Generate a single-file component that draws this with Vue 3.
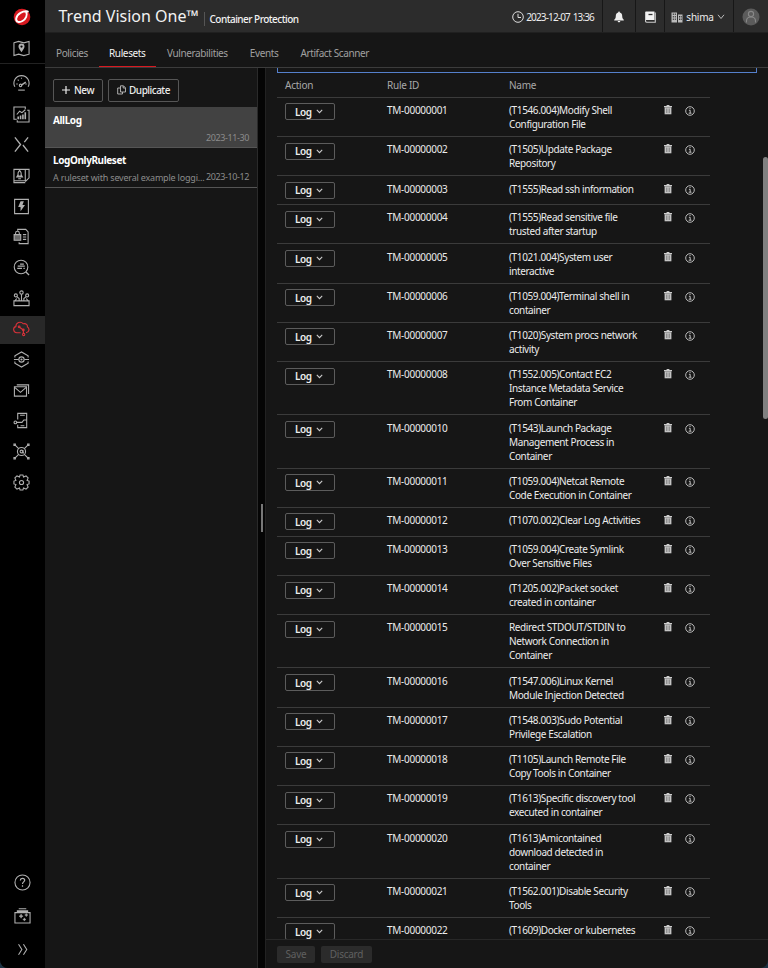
<template>
  <div class="app">
    <aside class="sidebar">
      <div class="logo">
        <svg width="18" height="18" viewBox="0 0 18 18">
          <circle cx="9" cy="9" r="8.300" fill="#d71920" />
          <path d="M14.800 3.500C10 2.500 4 6 3.200 10.500c-.5 3.800 3.300 4.300 6.300 2.500 3.500-2.100 5.200-6 3.700-9" fill="none" stroke="#fff" stroke-width="1.900" stroke-linecap="round" />
        </svg>
      </div>
      <div class="nav map"><svg class="icon" viewBox="0 0 18 18" v-html="icons.map"></svg></div>
      <div v-for="name in navItems" :key="name" class="nav" :class="{ active: name === 'cloud' }">
        <svg class="icon" viewBox="0 0 18 18" v-html="icons[name]"></svg>
      </div>
      <div class="nav-bottom">
        <div v-for="name in bottomItems" :key="name" class="nav">
          <svg class="icon" viewBox="0 0 18 18" v-html="icons[name]"></svg>
        </div>
      </div>
    </aside>

    <div class="main">
      <header class="header">
        <span class="title">Trend Vision One™</span>
        <span class="subtitle">Container Protection</span>
        <div class="clock">
          <svg width="12" height="12" viewBox="0 0 12 12" fill="none" stroke="#ddd">
            <circle cx="6" cy="6" r="5.300" /><path d="M6 2.800V6.500H9" />
          </svg>
          <span>2023-12-07 13:36</span>
        </div>
        <div class="tool bell">
          <svg width="10" height="12" viewBox="0 0 10 12" fill="#eee">
            <path d="M5 .5c.6 0 .8.400.8.900C7.500 1.800 8.200 3.200 8.200 5c0 2 .5 2.900 1.600 3.800v.7H.2v-.7C1.300 7.900 1.800 7 1.800 5c0-1.800.7-3.200 2.400-3.600 0-.5.2-.9.8-.9zM3.700 10h2.600c0 .8-.5 1.300-1.300 1.300S3.700 10.800 3.700 10z" />
          </svg>
        </div>
        <div class="tool book">
          <svg width="11" height="12" viewBox="0 0 11 12">
            <path d="M.5.500h9v8.500h-9z" fill="#f4f4f4" />
            <path d="M10.300 1.500v9.800H2c-1 0-1.500-.5-1.500-1.200V1" fill="none" stroke="#ccc" stroke-width="1.100" />
            <path d="M3.500 3.500h4" stroke="#333" stroke-width="1.300" />
          </svg>
        </div>
        <div class="tool account">
          <svg width="12" height="11" viewBox="0 0 12 11">
            <path d="M.5.500h5.500v10H.5zM7 2.500h4.500v8H7z" fill="#bbb" />
            <path d="M2.300 1.500v7M4.300 1.500v7M8.500 4v5M10.200 4v5" stroke="#333" stroke-dasharray="1.500 1" />
          </svg>
          <span>shima</span>
          <svg width="8" height="6" viewBox="0 0 8 6" fill="none" stroke="#bbb"><path d="M1 .8l3 3.700L7 .8" /></svg>
        </div>
        <div class="tool user">
          <svg width="18" height="18" viewBox="0 0 18 18" fill="none" stroke="#888" stroke-width="1.100">
            <circle cx="9" cy="9" r="8.500" fill="#5b5b5b" stroke="none" />
            <circle cx="9" cy="6" r="2.600" /><path d="M4.500 14.500v-1.500c0-2.700 1.700-4 4.500-4s4.500 1.300 4.500 4v1.500" />
          </svg>
        </div>
      </header>

      <nav class="tabs">
        <a v-for="tab in tabs" :key="tab" class="tab" :class="{ selected: tab === 'Rulesets' }">{{ tab }}</a>
      </nav>

      <div class="content">
        <section class="rulesets">
          <div class="actions">
            <button class="btn new">
              <svg width="8" height="8" viewBox="0 0 8 8" stroke="#eee" stroke-width="1.200"><path d="M4 0v8M0 4h8" /></svg>
              <span>New</span>
            </button>
            <button class="btn dup">
              <svg width="9" height="10" viewBox="0 0 9 10" fill="none" stroke="#bbb" stroke-width=".9">
                <path d="M3.500.800h3l2 2v4.200h-5z" /><path d="M6.200 1v2h2" /><path d="M3.500 3H.7v6h4.800V7" />
              </svg>
              <span>Duplicate</span>
            </button>
          </div>
          <div v-for="set in rulesets" :key="set.name" class="ruleset" :class="{ current: set.current }">
            <div class="name">{{ set.name }}</div>
            <div class="meta">
              <span class="desc">{{ set.desc }}</span>
              <span class="date">{{ set.date }}</span>
            </div>
          </div>
        </section>

        <div class="splitter"><div class="grip"></div></div>

        <section class="detail">
          <div class="scroll">
            <div class="field"></div>
            <div class="table">
              <div class="row head">
                <span>Action</span>
                <span>Rule ID</span>
                <span>Name</span>
              </div>
              <div v-for="rule in rules" :key="rule.id" class="row">
                <button class="select">
                  <span>Log</span>
                  <svg width="7" height="5" viewBox="0 0 7 5" fill="none" stroke="#ccc" stroke-width="1.100"><path d="M.8.900l2.700 2.700L6.200.9" /></svg>
                </button>
                <span class="id">TM-000000{{ rule.id }}</span>
                <span class="rule-name">{{ rule.name }}</span>
                <svg class="trash" width="8" height="10" viewBox="0 0 8 10">
                  <path d="M2.600 0h2.800v1H8v1.300H0V1h2.600z" fill="#ccc" /><path d="M.6 2.300h6.800V9.300H.6z" fill="#c4c4c4" />
                  <path d="M2.800 3.500v4.500M5.200 3.500v4.500" stroke="#666" stroke-width=".8" />
                </svg>
                <svg class="info" width="10" height="10" viewBox="0 0 10 10" fill="none" stroke="#ccc" stroke-width=".9">
                  <circle cx="5" cy="5" r="4.300" /><path d="M3.900 4.300h1.300v2.900M3.700 7.200h2.800M4.500 2.600h1.100" />
                </svg>
              </div>
            </div>
            <div class="scrollbar"></div>
          </div>
          <footer class="footer">
            <button disabled class="save">Save</button>
            <button disabled class="discard">Discard</button>
          </footer>
        </section>
      </div>
    </div>
  </div>
</template>

<script setup>
const tabs = ['Policies', 'Rulesets', 'Vulnerabilities', 'Events', 'Artifact Scanner']

const navItems = ['gauge', 'report', 'xdr', 'threat', 'bolt', 'lock', 'search', 'network', 'cloud', 'hex', 'mail', 'mobile', 'nodes', 'gear']
const bottomItems = ['help', 'box', 'expand']

const icons = {
  map: '<path d="M1 3l5-1.500 5.500 1.500L17 1.500V15l-5.500 1.500L6 15l-5 1.500z"/><path d="M9 13C6.800 9.800 5.800 8.500 5.800 7a3.200 3.200 0 0 1 6.400 0c0 1.500-1 2.800-3.200 6z" fill="currentColor" stroke="none"/><circle cx="9" cy="7" r="1.200" fill="#000" stroke="none"/>',
  gauge: '<path d="M2 12.500A8 8 0 1 1 16 12.500"/><path d="M5.500 16h7"/><path d="M3.500 9.500H5M5 5l1 1M9 3v1M14.500 9.500H13"/><path d="M8.500 11l5-3.500" stroke-width="1.500"/><circle cx="8" cy="11" r="1.300"/>',
  report: '<path d="M13 3.500V1H1v13h3"/><path d="M15 4.500h2V17H4.500v-2"/><path d="M5.500 14v-3M8 14v-4M10.500 14V9M13 14V6.500" stroke-width="1.700"/><path d="M4 9l3-3.500 2.500 1.500L13 4"/>',
  xdr: '<path d="M2 1.500l6 7.500-6 7.500M16 1.500l-4 5M16 16.500L10.500 9.500" stroke-width="1.400"/>',
  threat: '<path d="M1 2.500h12v12H1zM13 2.500h4v9l-4 4M1 14.500v2h12"/><path d="M7 3.500c1.800 1.500 2 3.500 1.500 6h-3C5 7 5.200 5 7 3.500zM5.500 8L4 10.500h6L8.500 8M5.500 12.500h3"/>',
  bolt: '<path d="M1.700 1.500h14.600v15H1.700z"/><path d="M8 3.500h3.500L10 7.500h2.700L8 14V9.500H5.500z" fill="currentColor" stroke="none"/>',
  lock: '<path d="M5 3V1.500h8.500l2.500 2.700V16.500H6.500V15"/><path d="M1.200 7h7v6h-7z" fill="currentColor" fill-opacity=".6"/><path d="M2.700 7V5.500a2 2 0 0 1 4 0V7M10.500 7h3.500M10.500 9.500h3.500M10.500 12h3.500"/>',
  search: '<circle cx="8.500" cy="8.500" r="7.200"/><path d="M13.700 13.700L17 17M5 7.500h7.500M4.500 10h5M11 10h1.500M7.500 5.500h4" stroke-width="1.400"/>',
  network: '<path d="M1 11.500h16v5H1zM2 11.500l2-2.500M16 11.500l-2-2.500M9 11V4.500M6.500 11V9L4 7M11.500 11V9L14 7"/><circle cx="9" cy="2.700" r="1.800"/><circle cx="3" cy="5.700" r="1.600"/><circle cx="15" cy="5.700" r="1.600"/>',
  cloud: '<path d="M8 13.500H4C-.2 13.200-.2 7.500 3 7 3 2.500 8 .8 11 4c2.900-.6 4.600 1.200 4.200 3.300 2.500 1.500 2.400 5.500-1.400 6.200"/><path d="M6.500 7.500L11 10.700v4" stroke-width="1.300"/><circle cx="6.500" cy="7.200" r=".9"/><circle cx="11.300" cy="15.300" r="1.200"/><circle cx="11" cy="10.500" r=".8"/>',
  hex: '<path d="M2 7V5l7-4 7 4v2M2 11v2l7 4 7-4v-2M1 9h5M12 9h5"/><circle cx="9" cy="9" r="2.800"/><circle cx="9" cy="9" r=".6"/>',
  mail: '<path d="M1.500 5h12.800v10H1.500zM4 3h12.500v9.800"/><path d="M1.500 5.500l6.400 5.500 6.400-5.500"/>',
  mobile: '<path d="M5 8V1.500h9.500v15H5V13.500"/><path d="M7.500 3.500h5M8 14.500h4M4 11h5.500l2-2.500h3"/><circle cx="2.500" cy="11" r="1.400"/>',
  nodes: '<circle cx="9" cy="9" r="4.300"/><circle cx="9" cy="9" r="1.500"/><path d="M10.500 7.500v3h1.200M2 2l4 4M16 2l-4 4M2 16l4-4M16 16l-4-4"/><path d="M1 1h1.500v1.500H1zM15.500 1H17v1.500h-1.500zM1 15.500h1.500V17H1zM15.500 15.500H17V17h-1.500z"/>',
  gear: '<path d="M7.500 1h3l.6 2.100 2.700-1.100 2.200 2.200-1.100 2.700 2.100.6v3l-2.100.6 1.100 2.700-2.200 2.200-2.700-1.100-.6 2.100h-3l-.6-2.100-2.700 1.100L2 13.800l1.100-2.700L1 10.500v-3l2.100-.6L2 4.200 4.200 2l2.700 1.100z"/><circle cx="9" cy="9" r="2.200"/>',
  help: '<circle cx="9" cy="9" r="8"/><path d="M6.800 6.800C6.800 3.700 11.300 4 11.300 6.600 11.300 8.200 9 8.500 9 10.500M9 12v1.500" stroke-width="1.300"/>',
  box: '<path d="M1 6h16v11H1zM3 4h12M5 1.800h8M3 4.800h12"/><path d="M7.500 7.500l.7 1.500 1.500.7-1.500.7-.7 1.500-.7-1.500-1.500-.7 1.500-.7zM13 6.800l.5 1.200 1.200.5-1.200.5-.5 1.200-.5-1.200-1.200-.5 1.200-.5zM11 11.500l.5 1.200 1.200.5-1.200.5-.5 1.200-.5-1.200-1.200-.5 1.200-.5z" fill="currentColor" stroke-width=".5"/>',
  expand: '<path d="M4.800 3.500l3.500 5.500-3.500 5.500M10 3.500l3.500 5.500L10 14.500"/>'
}

const rulesets = [
  { name: 'AllLog', desc: '', date: '2023-11-30', current: true },
  { name: 'LogOnlyRuleset', desc: 'A ruleset with several example loggi...', date: '2023-10-12' }
]

const rules = [
  { id: '01', name: '(T1546.004)Modify Shell\nConfiguration File' },
  { id: '02', name: '(T1505)Update Package\nRepository' },
  { id: '03', name: '(T1555)Read ssh information' },
  { id: '04', name: '(T1555)Read sensitive file\ntrusted after startup' },
  { id: '05', name: '(T1021.004)System user\ninteractive' },
  { id: '06', name: '(T1059.004)Terminal shell in\ncontainer' },
  { id: '07', name: '(T1020)System procs network\nactivity' },
  { id: '08', name: '(T1552.005)Contact EC2\nInstance Metadata Service\nFrom Container' },
  { id: '10', name: '(T1543)Launch Package\nManagement Process in\nContainer' },
  { id: '11', name: '(T1059.004)Netcat Remote\nCode Execution in Container' },
  { id: '12', name: '(T1070.002)Clear Log Activities' },
  { id: '13', name: '(T1059.004)Create Symlink\nOver Sensitive Files' },
  { id: '14', name: '(T1205.002)Packet socket\ncreated in container' },
  { id: '15', name: 'Redirect STDOUT/STDIN to\nNetwork Connection in\nContainer' },
  { id: '16', name: '(T1547.006)Linux Kernel\nModule Injection Detected' },
  { id: '17', name: '(T1548.003)Sudo Potential\nPrivilege Escalation' },
  { id: '18', name: '(T1105)Launch Remote File\nCopy Tools in Container' },
  { id: '19', name: '(T1613)Specific discovery tool\nexecuted in container' },
  { id: '20', name: '(T1613)Amicontained\ndownload detected in\ncontainer' },
  { id: '21', name: '(T1562.001)Disable Security\nTools' },
  { id: '22', name: '(T1609)Docker or kubernetes' }
]
</script>

<style>
body {
  background: #1b3142;
}
</style>

<style scoped>
* {
  box-sizing: border-box;
}
.app {
  display: flex;
  height: 968px;
  overflow: hidden;
  border-radius: 0 0 8px 8px;
  background: #161616;
  color: #ececec;
  font-family: "Noto Sans", "Open Sans", sans-serif;
  font-size: 10px;
  line-height: 14px;
  letter-spacing: -0.38px;
}
button {
  font: inherit;
  letter-spacing: inherit;
  color: inherit;
  padding: 0;
}
svg {
  flex: none;
}

/* sidebar */
.sidebar {
  display: flex;
  flex-direction: column;
  width: 45px;
  background: #000;
  color: #b0b0b0;
}
.logo {
  height: 34px;
  padding: 8px 0 0 13px;
}
.nav {
  display: flex;
  align-items: center;
  height: 30.7px;
  padding-left: 13px;
}
.nav.map {
  height: 30px;
  margin-bottom: 4px;
  border-bottom: 1px solid #222;
}
.nav.active {
  background: linear-gradient(#282828, #282828) 0 2px / 100% 28px no-repeat;
  color: #d8323a;
}
.icon {
  width: 17px;
  height: 17px;
  fill: none;
  stroke: currentColor;
  stroke-width: 1.15;
}
.nav-bottom {
  margin-top: auto;
  margin-bottom: 2px;
}
.nav-bottom .nav {
  height: 33.5px;
  padding-left: 14px;
}

/* header */
.main {
  flex: 1;
  display: flex;
  flex-direction: column;
  min-width: 0;
}
.header {
  display: flex;
  align-items: center;
  height: 33px;
  padding-left: 13.5px;
  background: #2c2c2c;
  border-bottom: 1px solid #202020;
}
.title {
  width: 145px;
  font-size: 16px;
  line-height: 30px;
  letter-spacing: 0;
  white-space: nowrap;
  color: #f2f2f2;
}
.subtitle {
  margin-top: 5px;
  padding-left: 5px;
  border-left: 1px solid #555;
  letter-spacing: -0.52px;
  font-weight: 500;
  white-space: nowrap;
  color: #f2f2f2;
}
.clock {
  display: flex;
  align-items: center;
  gap: 2px;
  margin-left: auto;
  padding: 1px 8px 0 0;
  letter-spacing: -0.85px;
  white-space: nowrap;
}
.clock span {
  word-spacing: 1px;
}
.tool {
  display: flex;
  align-items: center;
  justify-content: center;
  height: 32px;
  padding-top: 2px;
  border-left: 1px solid #171717;
}
.bell {
  width: 33px;
}
.book {
  width: 29px;
}
.account {
  width: 69px;
  gap: 3px;
  padding-right: 2px;
  letter-spacing: -0.25px;
}
.user {
  width: 35px;
}

/* tabs */
.tabs {
  display: flex;
  height: 35px;
  border-bottom: 1px solid #3c3c3c;
}
.tab {
  padding: 13px 0 0;
  margin: 0 11px;
  color: #a0a0a0;
  white-space: nowrap;
}
.tab.selected {
  margin: 0 0 0 -0.5px;
  padding: 13px 10.5px 0;
  border-bottom: 1px solid #d71920;
  color: #f4f4f4;
}

/* left list */
.content {
  flex: 1;
  display: flex;
  min-height: 0;
}
.rulesets {
  width: 213px;
  border-right: 1px solid #2a2a2a;
}
.actions {
  display: flex;
  gap: 5px;
  padding: 11px 0 5px 8px;
}
.btn {
  display: flex;
  align-items: center;
  justify-content: center;
  gap: 4px;
  height: 23px;
  padding-bottom: 2px;
  background: #161616;
  border: 1px solid #565656;
  border-radius: 2px;
  font-weight: 500;
}
.new {
  width: 50px;
}
.dup {
  width: 71px;
  gap: 3px;
  letter-spacing: -0.5px;
}
.ruleset {
  height: 40.5px;
  padding: 6px 8px 0;
  border-bottom: 1px solid #555;
}
.ruleset + .ruleset {
  padding-top: 5px;
}
.ruleset .name {
  font-weight: 700;
  letter-spacing: -0.4px;
  color: #fff;
}
.ruleset.current {
  background: #424242;
}
.meta {
  display: flex;
  justify-content: space-between;
  padding-top: 3.5px;
  font-size: 9px;
  letter-spacing: -0.2px;
  color: #8c8c8c;
  white-space: nowrap;
}
.desc {
  padding-top: 1px;
}
.date {
  letter-spacing: -0.4px;
}

.splitter {
  display: flex;
  align-items: flex-start;
  width: 7px;
  background: #050505;
}
.grip {
  width: 2px;
  height: 28px;
  margin: 436px 0 0 3px;
  background: #777;
}

/* rule table */
.detail {
  flex: 1;
  display: flex;
  flex-direction: column;
  min-width: 0;
  border-left: 1px solid #222;
}
.scroll {
  position: relative;
  flex: 1;
  min-height: 0;
  overflow: hidden;
  padding-left: 11px;
}
.field {
  width: 480px;
  height: 4.5px;
  border: 1px solid #5580cc;
  border-top: 0;
}
.table {
  width: 433px;
}
.row {
  display: grid;
  grid-template-columns: 102px 122px 155px 21px 1fr;
  align-items: start;
  min-height: 28.9px;
  padding: 5.4px 0 4.85px 8px;
  border-bottom: 1px solid #3b3b3b;
}
.row.head {
  min-height: 25px;
  letter-spacing: -0.25px;
  color: #a8a8a8;
}
.select {
  display: flex;
  align-items: center;
  justify-content: space-between;
  width: 50px;
  height: 17px;
  margin-top: 0.3px;
  padding: 0 11px 0 9px;
  background: #161616;
  border: 1px solid #5c5c5c;
  border-radius: 2px;
  font-weight: 600;
}
.id {
  letter-spacing: -0.28px;
}
.rule-name {
  white-space: pre;
}
.trash {
  margin-top: 2px;
}
.info {
  margin-top: 3px;
}
.scrollbar {
  position: absolute;
  top: 89px;
  right: 0;
  width: 5px;
  height: 262px;
  border-radius: 3px;
  background: #808080;
}
.footer {
  display: flex;
  gap: 6px;
  height: 29px;
  padding: 6px 0 0 11px;
  border-top: 1px solid #282828;
}
.footer button {
  height: 17px;
  padding-bottom: 1px;
  background: #2b2b2b;
  border: 0;
  border-radius: 2px;
  letter-spacing: -0.25px;
  color: #606060;
}
.save {
  width: 38px;
}
.discard {
  width: 51px;
}
</style>
